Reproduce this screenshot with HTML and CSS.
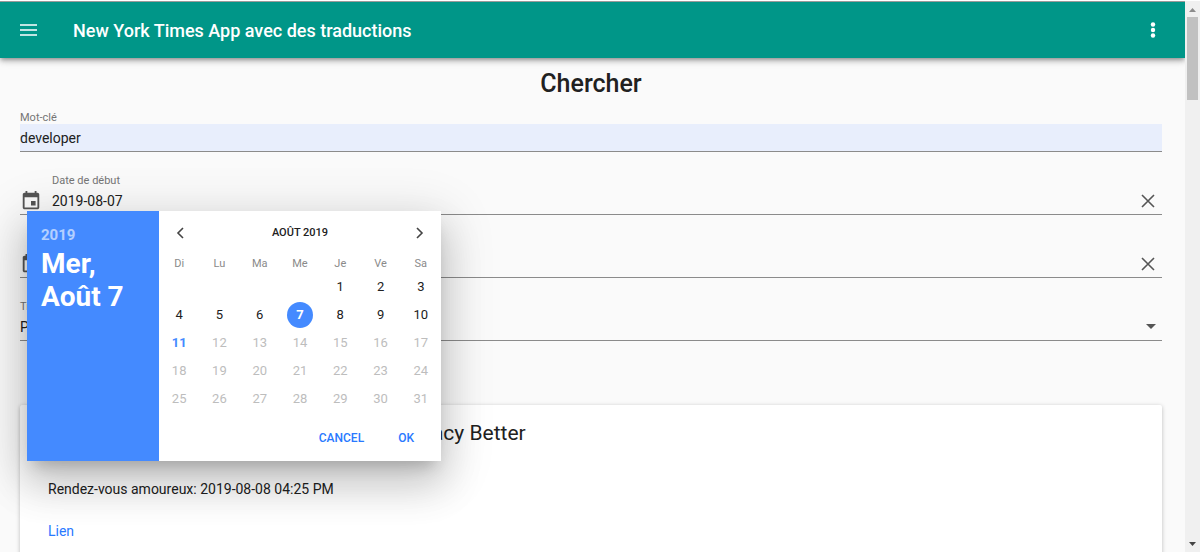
FILE: index.html
```html
<!DOCTYPE html>
<html lang="fr">
  <head>
    <meta charset="UTF-8" />
    <meta name="viewport" content="width=device-width, initial-scale=1.0" />
    <title>New York Times App avec des traductions</title>
    <link rel="stylesheet" href="styles.css">
  </head>
  <body>
    <div class="page">
      <header class="toolbar">
        <button class="icon-button menu-button" type="button" aria-label="Menu">
          <svg width="24" height="24" viewBox="0 0 24 24"><path d="M3 7h17M3 12h17M3 17h17" /></svg>
        </button>
        <h1 class="toolbar-title">New York Times App avec des traductions</h1>
        <button class="icon-button more-button" type="button" aria-label="Options">
          <svg width="24" height="24" viewBox="0 0 24 24">
            <circle cx="12" cy="6.5" r="2.2" />
            <circle cx="12" cy="12" r="2.2" />
            <circle cx="12" cy="17.5" r="2.2" />
          </svg>
        </button>
      </header>

      <main class="content">
        <h2 class="heading">Chercher</h2>

        <form class="search-form">
          <div class="field">
            <label for="keyword">Mot-clé</label>
            <input class="autofilled" id="keyword" type="text" value="developer" />
          </div>

          <div class="field date-field">
            <label for="start-date">Date de début</label>
            <svg class="calendar-icon" width="22" height="22" viewBox="0 0 24 24"><path d="M17 12h-5v5h5v-5zM16 1v2H8V1H6v2H5c-1.1 0-2 .9-2 2v14c0 1.1.9 2 2 2h14c1.1 0 2-.9 2-2V5c0-1.1-.9-2-2-2h-1V1h-2zm3 18H5V8h14v11z" /></svg>
            <input id="start-date" type="text" value="2019-08-07" />
            <button class="icon-button clear-button" type="button" aria-label="Effacer">
              <svg width="22" height="22" viewBox="0 0 22 22"><path d="M5 5l12 12M17 5L5 17" /></svg>
            </button>

            <div class="picker" role="dialog" aria-label="Choisir une date">
              <div class="picker-side">
                <div class="picker-year">2019</div>
                <div class="picker-date">Mer, Août 7</div>
              </div>
              <div class="picker-body">
                <div class="picker-nav">
                  <button type="button" aria-label="Mois précédent">
                    <svg width="22" height="22" viewBox="0 0 22 22"><path d="M14 6l-5 5 5 5" /></svg>
                  </button>
                  <span>AOÛT 2019</span>
                  <button type="button" aria-label="Mois suivant">
                    <svg width="22" height="22" viewBox="0 0 22 22"><path d="M8 6l5 5-5 5" /></svg>
                  </button>
                </div>
                <table class="calendar">
                  <thead>
                    <tr><th>Di</th><th>Lu</th><th>Ma</th><th>Me</th><th>Je</th><th>Ve</th><th>Sa</th></tr>
                  </thead>
                  <tbody>
                    <tr><td></td><td></td><td></td><td></td><td>1</td><td>2</td><td>3</td></tr>
                    <tr><td>4</td><td>5</td><td>6</td><td><span class="selected">7</span></td><td>8</td><td>9</td><td>10</td></tr>
                    <tr class="disabled"><td class="today">11</td><td>12</td><td>13</td><td>14</td><td>15</td><td>16</td><td>17</td></tr>
                    <tr class="disabled"><td>18</td><td>19</td><td>20</td><td>21</td><td>22</td><td>23</td><td>24</td></tr>
                    <tr class="disabled"><td>25</td><td>26</td><td>27</td><td>28</td><td>29</td><td>30</td><td>31</td></tr>
                  </tbody>
                </table>
                <div class="picker-actions">
                  <button type="button">CANCEL</button>
                  <button type="button">OK</button>
                </div>
              </div>
            </div>
          </div>

          <div class="field date-field">
            <label for="end-date">Date de fin</label>
            <svg class="calendar-icon" width="22" height="22" viewBox="0 0 24 24"><path d="M17 12h-5v5h5v-5zM16 1v2H8V1H6v2H5c-1.1 0-2 .9-2 2v14c0 1.1.9 2 2 2h14c1.1 0 2-.9 2-2V5c0-1.1-.9-2-2-2h-1V1h-2zm3 18H5V8h14v11z" /></svg>
            <input id="end-date" type="text" value="2019-08-08" />
            <button class="icon-button clear-button" type="button" aria-label="Effacer">
              <svg width="22" height="22" viewBox="0 0 22 22"><path d="M5 5l12 12M17 5L5 17" /></svg>
            </button>
          </div>

          <div class="field select-field">
            <label for="sort">Trier par</label>
            <select id="sort">
              <option>Plus récent</option>
              <option>Plus ancien</option>
            </select>
          </div>
        </form>

        <article class="card">
          <h3>A Developer Who Hopes to Make Democracy Better</h3>
          <p>Rendez-vous amoureux: 2019-08-08 04:25 PM</p>
          <a href="#">Lien</a>
        </article>
      </main>
    </div>

    <div class="scrollbar" aria-hidden="true">
      <svg width="15" height="16" viewBox="0 0 15 16"><path class="arrow-up" d="M4 11l3.5-4 3.5 4z" /></svg>
      <div class="scrollbar-thumb"></div>
      <svg class="arrow-bottom" width="15" height="16" viewBox="0 0 15 16"><path d="M4 6l3.5 4L11 6z" /></svg>
    </div>
  </body>
</html>
```

FILE: styles.css
```css
* {
  margin: 0;
  padding: 0;
  box-sizing: border-box;
}

body {
  display: flex;
  height: 100vh;
  overflow: hidden;
  border-top: 1px solid #fff;
  font-family: Roboto, "Liberation Sans", sans-serif;
  font-size: 14px;
  color: #212121;
  background: #fafafa;
}

button,
input,
select {
  font: inherit;
  color: inherit;
  border: none;
  background: none;
  outline: none;
}

button {
  cursor: pointer;
}

svg {
  display: block;
}

.page {
  flex: 1;
  min-width: 0;
  overflow: hidden;
  border-top: 1px solid #9a9a9a;
}

/* Toolbar */
.toolbar {
  position: relative;
  display: flex;
  align-items: center;
  height: 56px;
  padding: 0 20px 0 17px;
  color: #fff;
  background: #009688;
  box-shadow: 0 2px 4px -1px rgba(0, 0, 0, 0.3), 0 4px 5px rgba(0, 0, 0, 0.14),
    0 1px 10px rgba(0, 0, 0, 0.12);
}

.toolbar-title {
  flex: 1;
  padding-left: 32px;
  font-size: 18px;
  font-weight: 500;
}

.menu-button path {
  stroke: #fff;
  stroke-width: 1.6;
}

.more-button circle {
  fill: #fff;
}

/* Search form */
.content {
  padding: 0 23px 0 20px;
}

.heading {
  padding: 12px 0;
  font-size: 25px;
  line-height: 28px;
  font-weight: 500;
  text-align: center;
}

.search-form {
  display: grid;
  gap: 23px;
  padding: 2px 0 64px;
}

.field {
  position: relative;
  display: grid;
  grid-template-rows: 12px 27px;
  border-bottom: 1px solid #8b8b8b;
}

.field label {
  font-size: 11px;
  line-height: 12px;
  color: #757575;
}

.field input,
.field select {
  width: 100%;
  min-width: 0;
  height: 27px;
}

.field .autofilled {
  background: #e8eefc;
}

.field select {
  appearance: none;
}

.select-field::after {
  content: "";
  position: absolute;
  right: 6px;
  bottom: 11px;
  border: 5px solid transparent;
  border-top-color: #555;
  border-bottom-width: 0;
}

.date-field {
  grid-template-columns: 32px 1fr 25px;
}

.date-field label {
  grid-column: 2 / 4;
}

.date-field .calendar-icon {
  grid-column: 1;
  align-self: center;
  fill: #555;
}

.clear-button path {
  stroke: #555;
  stroke-width: 1.6;
}

/* Date picker */
.picker {
  position: absolute;
  z-index: 5;
  top: 36px;
  left: 7px;
  display: flex;
  width: 414px;
  background: #fff;
  box-shadow: 0 11px 15px -7px rgba(0, 0, 0, 0.2),
    0 24px 38px 3px rgba(0, 0, 0, 0.14), 0 9px 46px 8px rgba(0, 0, 0, 0.12);
}

.picker-side {
  width: 132px;
  padding: 14px;
  color: #fff;
  background: #448aff;
}

.picker-year {
  font-size: 15px;
  line-height: 20px;
  font-weight: 700;
  opacity: 0.6;
}

.picker-date {
  padding-top: 2px;
  font-size: 28px;
  line-height: 33px;
  font-weight: 700;
}

.picker-body {
  flex: 1;
}

.picker-nav {
  display: flex;
  align-items: center;
  justify-content: space-between;
  height: 43px;
  padding: 0 10px;
  font-size: 11px;
  font-weight: 500;
}

.picker-nav path {
  fill: none;
  stroke: #444;
  stroke-width: 1.6;
}

.calendar {
  width: 100%;
  table-layout: fixed;
  border-collapse: collapse;
  text-align: center;
}

.calendar th {
  height: 19px;
  font-size: 11px;
  font-weight: 400;
  color: #8a8a8a;
}

.calendar td {
  height: 28px;
  font-size: 13px;
  line-height: 26px;
}

.calendar .disabled {
  color: #bdbdbd;
}

.calendar .today {
  font-weight: 700;
  color: #448aff;
}

.calendar .selected {
  display: block;
  width: 26px;
  margin: 0 auto;
  border-radius: 50%;
  font-weight: 700;
  color: #fff;
  background: #448aff;
}

.picker-actions {
  display: flex;
  justify-content: flex-end;
  gap: 6px;
  padding: 11px 13px 9px;
}

.picker-actions button {
  height: 28px;
  padding: 0 14px;
  font-size: 12px;
  font-weight: 500;
  color: #2979ff;
}

/* Results */
.card {
  padding: 14px 28px 40px;
  background: #fff;
  border-radius: 2px;
  box-shadow: 0 1px 4px rgba(0, 0, 0, 0.25);
}

.card h3 {
  font-size: 21px;
  line-height: 28px;
  font-weight: 400;
}

.card p {
  padding: 32px 0 22px;
  line-height: 20px;
}

.card a {
  display: block;
  line-height: 20px;
  color: #2979ff;
  text-decoration: none;
}

/* Scrollbar */
.scrollbar {
  display: flex;
  flex-direction: column;
  width: 15px;
  background: #f0f0f0;
}

.scrollbar-thumb {
  height: 83px;
  margin: 0 2px;
  background: #c1c1c1;
}

.scrollbar path {
  fill: #444;
}

.scrollbar .arrow-up {
  fill: #8c8c8c;
}

.arrow-bottom {
  margin-top: auto;
}
```
